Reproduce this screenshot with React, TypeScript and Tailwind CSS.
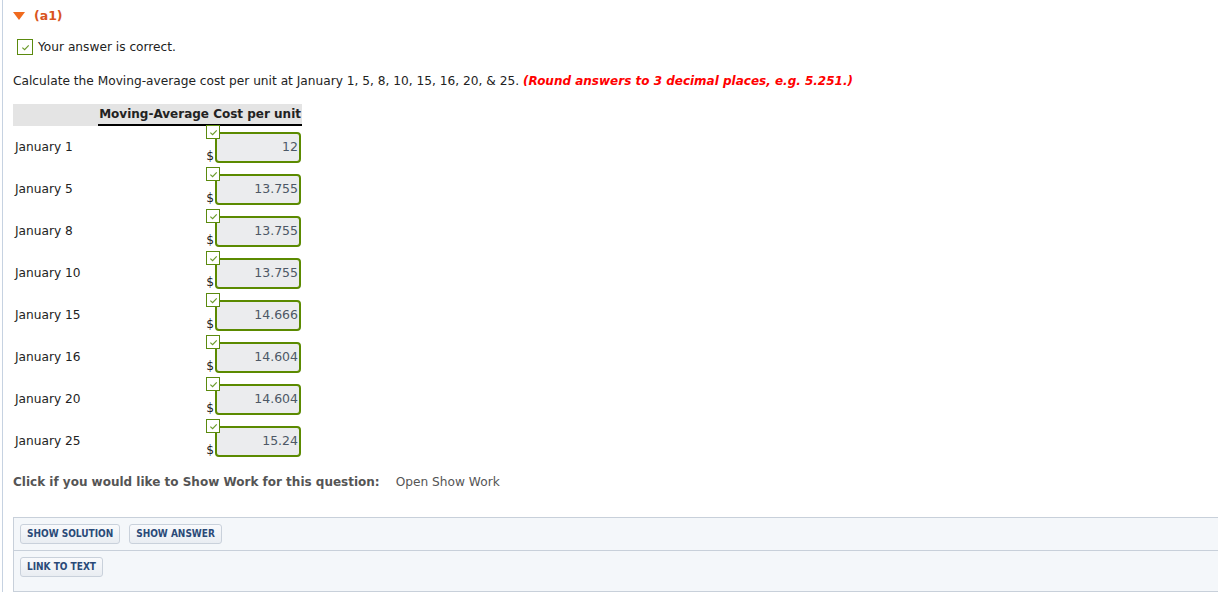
const rows = [
  { label: 'January 1', value: '12' },
  { label: 'January 5', value: '13.755' },
  { label: 'January 8', value: '13.755' },
  { label: 'January 10', value: '13.755' },
  { label: 'January 15', value: '14.666' },
  { label: 'January 16', value: '14.604' },
  { label: 'January 20', value: '14.604' },
  { label: 'January 25', value: '15.24' },
];

function CheckBox({ className = '' }: { className?: string }) {
  return (
    <span className={`flex items-center justify-center bg-white border border-[#5b8a0e] ${className}`}>
      <svg viewBox="0 0 10 10" className="w-[9px] h-[9px]">
        <path d="M1.5 5.2 L4 7.5 L8.6 2.6" fill="none" stroke="#6a9a2a" strokeWidth="1.3" />
      </svg>
    </span>
  );
}

function AnswerRow({ label, value }: { label: string; value: string }) {
  return (
    <div className="flex h-[42px]">
      <div className="w-[85px] pl-[2px] pt-[13px] text-[#222]">{label}</div>
      <div className="w-[204px] flex justify-end items-start pt-[6px] pr-[1px]">
        <div className="relative flex items-end">
          <CheckBox className="absolute left-0 top-[-7px] w-[14px] h-[14px]" />
          <span className="leading-none mb-[1px] text-[#222]">$</span>
          <div className="ml-[1px] w-[86px] h-[31px] rounded-[4px] border-2 border-[#5b8a00] bg-[#ebecee] text-right pr-[1px] pt-[5px] text-[12.5px] text-[#4d5866]">
            {value}
          </div>
        </div>
      </div>
    </div>
  );
}

function PanelButton({ children }: { children: React.ReactNode }) {
  return (
    <button className="h-[20px] px-[6px] rounded-[3px] border border-[#c9d1db] bg-gradient-to-b from-[#f9fafc] to-[#e9edf2] font-['DejaVu_Sans_Condensed','DejaVu_Sans',Tahoma,sans-serif] text-[10px] font-bold text-[#2a4a78] leading-none">
      {children}
    </button>
  );
}

export default function App() {
  return (
    <div className="min-h-[592px] bg-white font-['DejaVu_Sans',Verdana,sans-serif] text-[12.2px] leading-[16px] text-[#222]">
      <div className="ml-[2px] border-l border-[#c6d2e1] min-h-[592px] pl-[10px]">
        <div className="flex items-center h-[30px] pt-[1px]">
          <svg viewBox="0 0 12 8" className="w-[12px] h-[8px]">
            <path d="M0 0 H12 L6 8 Z" fill="#f06a1e" />
          </svg>
          <span className="ml-[9px] font-bold text-[12.5px] text-[#d9541e]">(a1)</span>
        </div>
        <div className="flex items-center mt-[9px] ml-[4px] h-[16px]">
          <CheckBox className="w-[16px] h-[16px]" />
          <span className="ml-[5px]">Your answer is correct.</span>
        </div>
        <div className="mt-[18px]">
          Calculate the Moving-average cost per unit at January 1, 5, 8, 10, 15, 16, 20, &amp; 25.{' '}
          <span className="font-bold italic text-[12px] text-[#ff0000]">(Round answers to 3 decimal places, e.g. 5.251.)</span>
        </div>
        <div className="mt-[15px] w-[289px]">
          <div className="flex h-[22px] bg-[#e4e4e4]">
            <div className="w-[85px]" />
            <div className="w-[204px] border-b-2 border-black text-right font-bold text-[12px] leading-[20px] pr-[1px] whitespace-nowrap">
              Moving-Average Cost per unit
            </div>
          </div>
          {rows.map((r) => (
            <AnswerRow key={r.label} label={r.label} value={r.value} />
          ))}
        </div>
        <div className="mt-[12px] flex items-baseline text-[#555]">
          <span className="font-bold text-[12px]">Click if you would like to Show Work for this question:</span>
          <span className="ml-[16px]">Open Show Work</span>
        </div>
        <div className="mt-[27px] border-t border-l border-b border-[#c8d0da] bg-[#f4f7fa]">
          <div className="h-[33px] flex items-center gap-[9px] pl-[6px] border-b border-[#c8d0da]">
            <PanelButton>SHOW SOLUTION</PanelButton>
            <PanelButton>SHOW ANSWER</PanelButton>
          </div>
          <div className="h-[40px] pl-[6px] pt-[6px]">
            <PanelButton>LINK TO TEXT</PanelButton>
          </div>
        </div>
      </div>
    </div>
  );
}
